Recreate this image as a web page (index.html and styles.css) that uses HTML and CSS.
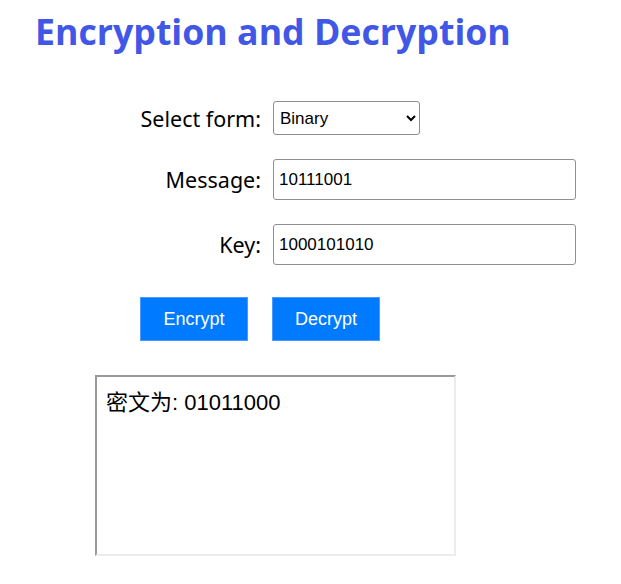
FILE: index.html
```html
<!DOCTYPE html>
<html>
<head>
<meta charset="utf-8">
<link rel="stylesheet" href="styles.css">
</head>
<body>
<h1 class="title">Encryption and Decryption</h1>
<form class="form">
  <label class="label" for="mode">Select form:</label>
  <div class="field"><select id="mode" class="select"><option>Binary</option></select></div>
  <label class="label" for="msg">Message:</label>
  <div class="field"><input id="msg" class="input" type="text" value="10111001"></div>
  <label class="label" for="key">Key:</label>
  <div class="field"><input id="key" class="input" type="text" value="1000101010"></div>
</form>
<div class="actions">
  <button class="btn" type="button">Encrypt</button>
  <button class="btn" type="button">Decrypt</button>
</div>
<div class="output">密文为: 01011000</div>
</body>
</html>
```
FILE: styles.css
```css
body {
  margin: 0;
  background: #fff;
  font-family: "Open Sans", "Noto Sans", "Noto Sans CJK SC", sans-serif;
  color: #000;
}
.title {
  margin: 0;
  padding: 8px 0 0 35px;
  font-size: 35.7px;
  font-weight: 700;
  color: #4157e5;
  line-height: 46px;
}
.form {
  display: grid;
  grid-template-columns: 261px 303px;
  column-gap: 12px;
  row-gap: 24px;
  margin-top: 47px;
  align-items: center;
}
.label {
  text-align: right;
  font-size: 21.5px;
  font-family: "Noto Sans", "Open Sans", sans-serif;
}
.field { display: flex; }
.select {
  width: 147px;
  height: 34px;
  font-family: "Liberation Sans", Arial, sans-serif;
  font-size: 17px;
  border: 1px solid #8f8f8f;
  border-radius: 3px;
  background: #fff;
  padding: 0 2px;
  color: #000;
}
.input {
  width: 303px;
  height: 41px;
  box-sizing: border-box;
  font-family: "Liberation Sans", Arial, sans-serif;
  font-size: 17px;
  border: 1px solid #8f8f8f;
  border-radius: 3px;
  padding: 0 5px;
  color: #000;
}
.actions {
  display: flex;
  gap: 24px;
  padding-left: 140px;
  margin-top: 32px;
}
.btn {
  width: 108px;
  height: 44px;
  background: #007bff;
  border: 1px solid #4a9bff;
  color: #fff;
  font-family: "Liberation Sans", Arial, sans-serif;
  font-size: 18px;
  padding: 0;
}
.output {
  margin: 34px 0 0 95px;
  width: 361px;
  height: 181px;
  box-sizing: border-box;
  border: 2px solid;
  border-color: #9a9a9a #ececec #ececec #9a9a9a;
  padding: 11px 9px;
  font-family: "Liberation Sans", "Noto Sans CJK SC", sans-serif;
  font-size: 22px;
  line-height: 30px;
}
```
